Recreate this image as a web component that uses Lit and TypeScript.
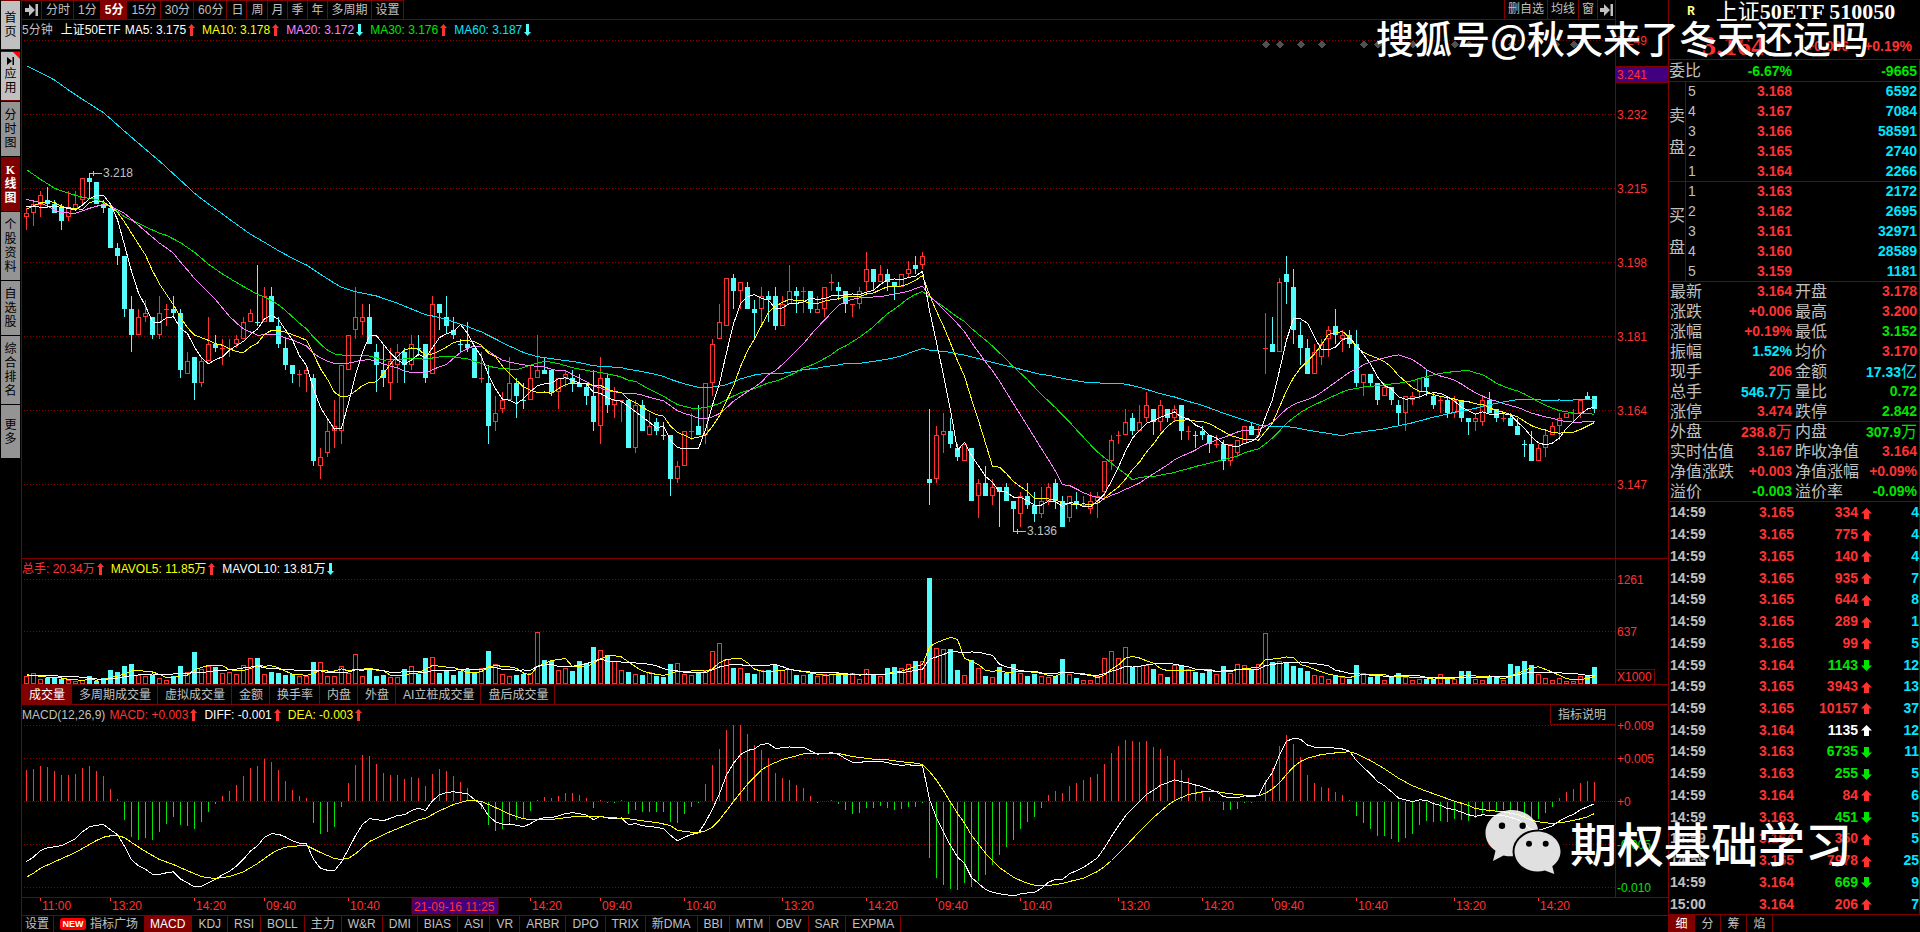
import { LitElement, html, svg, css, nothing } from "lit";
import { customElement } from "lit/decorators.js";
import { classMap } from "lit/directives/class-map.js";

/* ---------- market data ---------- */

interface Candle { up: boolean; high: number; top: number; bottom: number; low: number; }
type Key = [number, number];

/* Values are kept in thirds of a chart unit, measured downwards from the top of the window.
   Each record is direction + high, body top, body bottom, low. */
const parse = (text: string, base: number): Candle[] =>
  text.trim().split(/\s*;\s*/).filter(Boolean).map((row) => {
    const [high, top, bottom, low] = row.slice(1).split(",").map((n) => Number(n) + base);
    return { up: row[0] === "u", high, top, bottom, low };
  });

const CANDLES: Candle[] = [
  ...parse(`u625,640,650,690;u600,613,638,678;u573,586,612,651;d561,600,612,625;d600,612,638,638;d612,625,663,690;
u573,625,650,663;u573,613,625,630;u535,535,598,612;d519,534,546,598;d546,546,612,612;d600,612,625,638;
d625,625,744,744;d730,744,768,795;d768,768,927,951;d888,927,1005,1056;u927,952,1003,1003;u900,940,950,965;
d951,951,1005,1017;u888,940,1004,1017;u913,928,928,978;d888,927,939,951;d927,939,1110,1134;u1057,1084,1120,1120;
d1071,1071,1149,1200;u1071,1084,1148,1161;u952,1032,1082,1082;d1005,1032,1044,1056;u1018,1045,1045,1095;u1018,1045,1045,1071;
u1005,1018,1030,1044;u951,967,1016,1016;u927,940,965,965;d795,967,967,978;u861,888,965,965;d861,888,966,966;
d951,978,1032,1044;d1018,1044,1095,1110;d1095,1095,1122,1149;u1110,1122,1122,1161;u1097,1111,1121,1176`, 0),
  ...parse(`d432,444,693,708;u654,681,707,747;u564,603,667,681;u510,588,601,654;u406,406,601,642;u316,316,418,418;
u171,262,298,327;u222,262,274,315;d222,261,342,342;d342,366,405,486;d342,420,444,471;u354,393,457,510;
u342,367,403,459;d354,366,405,459;u316,343,403,420;d316,355,355,378;d342,342,444,459;u198,222,430,430;
d222,222,249,300;d198,261,288,313;d262,300,315,327;d327,343,343,366;d276,342,354,366;d354,354,444,444;
u366,445,445,459;d405,459,588,642;u498,550,574,603;u486,511,535,549;u381,460,508,508;d444,459,498,564;
d459,511,511,537;u408,445,508,508;u316,421,442,442;d381,420,432,432;d420,420,486,498;u445,445,484,537;
u420,433,443,471;d420,444,459,486;d432,459,471,471;d459,471,498,525;d420,498,576,603;u381,445,586,642;
d432,444,525,549;u471,511,523,564;u511,511,511,576;d510,510,654,654;u510,526,652,669;d510,525,603,603;
u549,589,613,613;d564,576,603,615;d576,616,616,630;d615,615,747,798;u693,709,745,759;u604,604,706,706;
u549,604,604,630;d525,588,615,615;u460,460,613,642;u327,343,457,498;u222,277,325,325;u145,145,286,286;
d132,144,183,237;u157,157,181,237;d156,171,237,237;d210,237,249,327;u171,199,235,285;d183,198,210,276;
d171,198,288,300;u198,223,286,286;u105,184,220,220;d171,183,198,249;u171,184,184,249;d183,183,237,249;
u198,238,247,247;u172,172,235,261;u132,157,157,183;d156,171,183,210;d183,183,222,249;u224,224,224,261;
u171,184,220,237;u66,118,154,183;d117,117,156,183;u105,133,154,154;d117,132,156,183;d156,156,171,210;
u133,133,168,168;u93,118,130,144;d78,105,117,132;u66,79,103,117;d537,747,759,825;u588,616,745,759;
u549,604,613,669;d564,603,642,654;d642,654,681,693;u643,643,691,691;d654,654,813,813;u747,760,796,864;
d708,759,798,798;u747,772,796,825;d771,771,786,891;d759,771,813,813;d813,813,837,906;u786,799,850,891;
d759,798,825,837;d786,825,852,876;u771,814,850,864;u759,773,811,825;d747,759,813,837;d798,813,891,891;
u799,799,862,876;d786,813,825,837;u798,826,826,831;u786,814,836,852;u786,799,811,864;u694,694,784,811;
u615,631,691,720;u603,616,616,642;u537,577,613,613;d549,564,603,615;u525,577,601,601;u486,526,562,576;
d537,537,576,615;u510,526,574,603;d537,537,564,576;u525,538,562,576;d525,525,603,630;u588,604,604,630;
d603,616,616,654;d588,603,615,630;d615,615,642,669;u615,643,643,654;d630,642,693,720;u643,643,691,708;
u631,631,667,681;u589,589,640,640;d576,588,615,615;u588,616,616,620;u249,355,355,432;d261,342,366,366;
u144,157,364,364;d78,132,156,222;d117,171,300,342;d276,315,354,405;d327,354,432,432;u342,367,430,430;
u327,343,379,405;u288,301,325,381;d237,288,315,342;u300,316,325,366;d300,315,342,354;d300,342,459,471;
u433,433,457,498;d432,432,459,471;d459,459,510,525;u459,472,496,496;d471,471,510,525;d510,525,549,588;
u499,499,547,603;u486,499,508,525;u445,445,484,508;d420,444,471,498;d486,498,525,537;u498,511,511,549;
d498,510,549,564;u498,511,547,564;d510,510,564,576;d564,564,576,615;u549,565,574,603;u498,511,574,588;
d486,510,549,549;d537,537,564,576;u549,565,565,576;d549,564,588,588;d564,588,615,615;d630,643,643,681;
d603,642,693,693;u642,655,691,691;u603,616,652,681;u576,589,613,613;u549,565,586,630;u549,549,562,562;
u537,550,550,576;u511,511,547,564;d486,498,510,510;d498,498,537,549`, 690),
];

const heights = (base: number, text: string): number[] => text.trim().split(/[\s,]+/).map((n) => base - Number(n));

const VOLUME: number[] = [
  ...heights(731, `711,700,718,717,717,720,721,726,722,709,726,715,693,699,681,675,708,711,708,717,723,711,681,697,639,688,
679,684,700,697,703,676,655,657,703,699,702,708,703,709,711,669,667,711,709,679,700,643,709,693,711,708,712,712,690,679,705,
657,652,702,693,708,696,689,702,685,636,673,703,709,708,705,700,577,663,664,691,685,696,666,672,624,631,648,664,691`),
  ...heights(401, `369,373,378,367,381,384,345,340,373,376,371,361,304,280,330,357,355,372,375,361,363,346,363,359,378,376,
375,379,373,373,370,376,371,388,358,375,379,357,354,355,343,336,334,87,295,298,300,363,376,331,355,381,382,354,370,345,370,
381,375,379,382,379,330,373,387,391,391,379,325,304,325,292,352,349,346,360,373,384,346,346,358,369,372,360,373,351,370,343,
346,361,343,250,339,334,342,351,357,366,376,379,388,378,382,390,348,370,384,378,391,381,370,382,391,388,390,388,373,384,388,
366,366,388,391,382,384,391,345,351,336,348,373,385,393,385,394,394,379,378,354`),
];

const MACD_BARS: number[] = `94,97,106,103,91,79,79,82,100,106,91,76,37,7,-53,-104,-113,-107,-113,-89,-65,-44,-68,-71,-80,-59,-29,-5,
16,31,49,76,100,106,127,118,94,61,34,16,10,-62,-95,-89,-74,-14,55,109,139,136,112,85,79,79,67,73,70,46,82,97,91,76,58,40,6,
-20,-68,-86,-80,-59,-53,-47,-26,2,13,10,16,25,25,19,10,-17,4,-4,-4,2,-35,-23,-29,-29,-29,-29,-59,-62,-35,-14,-2,52,109,157,
214,229,229,202,169,154,130,85,70,64,49,40,16,-4,1,4,-5,-23,-35,-32,-17,-17,-11,-17,-23,-20,-14,-14,-4,-167,-227,-248,-260,
-263,-242,-254,-236,-218,-188,-158,-134,-113,-80,-59,-44,-17,19,31,25,46,55,64,73,82,112,145,166,184,181,178,181,163,157,136,
124,94,70,49,31,13,-1,-23,-23,-20,-4,-4,0,64,100,166,199,172,133,79,55,43,40,28,19,4,-41,-62,-80,-101,-101,-110,-119,-107,-95,
-68,-56,-59,-56,-59,-50,-53,-56,-47,-32,-29,-26,-23,-26,-29,-44,-56,-50,-32,-14,10,28,37,55,61,58`.split(",").map(Number);

const spread = (keys: Key[]): number[] => {
  const out: number[] = [];
  for (let k = 0; k < keys.length - 1; k++) {
    const [a, ya] = keys[k];
    const [b, yb] = keys[k + 1];
    for (let i = a; i < b; i++) out.push(ya + ((yb - ya) * (i - a)) / (b - a));
  }
  out.push(keys[keys.length - 1][1]);
  return out;
};

const keysFrom = (zero: number, text: string): Key[] =>
  text.trim().split(/\s+/).map((pair) => {
    const [i, y] = pair.split(":").map(Number);
    return [i, zero - y];
  });

const DEA: number[] = spread([
  ...keysFrom(1084, `0:1311 1:1299 2:1284 4:1265 7:1237 10:1201 11:1191 12:1187 13:1187 14:1192 15:1207 17:1234 19:1258 21:1273 23:1292
25:1309 26:1313 27:1315 29:1309 31:1295 33:1270 35:1240 36:1229 37:1221 39:1217 40:1216 42:1237 44:1255 45:1258 46:1254 47:1241 49:1204
52:1174 54:1157 56:1139 57:1134 59:1112 61:1093 63:1081 64:1081 65:1084 67:1102 69:1122 71:1136 73:1139 75:1138 78:1130 82:1130`),
  ...keysFrom(754, `86:806 88:812 90:817 92:826 93:841 95:846 96:847 97:842 98:831 99:809 101:754 103:702 105:659 106:646 108:628
110:617 111:611 113:610 116:610 118:619 121:627 123:629 125:635 127:639 128:643 129:664 130:690 131:722 132:756 133:789 134:819
135:855 136:882 137:909 138:932 139:952 140:967 141:981 142:991 143:999 144:1005 145:1006 146:1006 147:1003 148:1000 149:994
151:984 153:964 154:949 155:931 157:889 159:844 161:802 163:766 164:751 166:733 168:725 170:724 171:728 173:733 175:737 176:737
177:729 178:716 179:698 180:673 181:650 182:634 183:624 185:613 188:606 189:605 190:611 192:631 194:656 196:684 198:707 200:723
202:738 204:753 206:766 207:775 209:781 211:785 213:793 215:810 216:815 217:818 218:820 220:815 222:806 223:800 224:790`),
]);
const DIFF = DEA.map((v, i) => v + MACD_BARS[i] / 2);

const average = (source: number[], n: number, lead: Key[]): number[] => {
  const start = spread(lead);
  return source.map((_, i) =>
    i < n - 1 && start[i] !== undefined
      ? start[i]
      : source.slice(Math.max(0, i - n + 1), i + 1).reduce((a, b) => a + b, 0) / Math.min(n, i + 1));
};

const CLOSES = CANDLES.map((c) => (c.up ? c.top : c.bottom));
const PRICE_LINES: [string, number[]][] = [
  ["ma60", average(CLOSES, 60, [[0, 197], [2, 218], [4, 240], [6, 270], [8, 298], [10, 325], [11, 338], [13, 375], [15, 412],
    [17, 448], [19, 483], [21, 522], [23, 560], [24, 580], [26, 612], [28, 642], [30, 673], [32, 703], [34, 727], [36, 752],
    [38, 775], [40, 795], [42, 823], [44, 850], [45, 862], [47, 875], [50, 888], [53, 910], [57, 944], [59, 952]])],
  ["ma30", average(CLOSES, 30, [[0, 509], [2, 538], [4, 565], [6, 580], [8, 592], [10, 598], [12, 618], [14, 650], [17, 680],
    [19, 700], [20, 706], [22, 728], [24, 757], [26, 793], [28, 822], [29, 835]])],
  ["ma20", average(CLOSES, 20, [[0, 598], [2, 608], [4, 630], [5, 638], [7, 640], [9, 625], [11, 613], [12, 618], [14, 640],
    [16, 676], [18, 712], [19, 728]])],
  ["ma10", average(CLOSES, 10, [[0, 628], [1, 617], [2, 609], [3, 604], [4, 607], [5, 620], [7, 626], [8, 628]])],
  ["ma5", average(CLOSES, 5, [[0, 620], [1, 618], [2, 622], [3, 621]])],
];
const VOLUME_LINES: [string, number[]][] = [
  ["ma10", average(VOLUME, 5, [[0, 26], [1, 24], [3, 19]])],
  ["ma5", average(VOLUME, 10, [[0, 25], [2, 25], [5, 22], [8, 19]])],
];

/* ---------- chart geometry ---------- */

const W = 1593;
const PRICE = { top: 20, height: 538 };
const VOL = { top: 559, height: 125 };
const MACD = { top: 705, height: 192 };
const cx = (i: number) => 4.5 + 7 * i;
const pctX = (x: number) => `${((x / W) * 100).toFixed(3)}%`;
const pct = (y: number, panel: { height: number }) => `${((y / panel.height) * 100).toFixed(3)}%`;
const points = (values: number[], toY: (v: number) => number) =>
  values.map((v, i) => `${cx(i)},${toY(v).toFixed(1)}`).join(" ");

const grid = (ys: number[]) => ys.map((y) => svg`<line class="grid" x1="2" x2=${W} y1=${y} y2=${y}></line>`);

const candle = (c: Candle, i: number) => {
  const x = cx(i);
  const snap = c.up ? Math.floor : Math.round;
  const high = Math.round(c.high / 3) - PRICE.top;
  const low = Math.round(c.low / 3) - PRICE.top;
  const top = snap(c.top / 3) - PRICE.top;
  const bottom = snap(c.bottom / 3) - PRICE.top;
  const kind = c.up ? "up" : "down";
  if (c.top === c.bottom) {
    return svg`<path class="${kind} line" d="M${x} ${high}V${Math.max(low, top + 1)}M${x - 2.5} ${top + 0.5}h5"></path>`;
  }
  return c.up
    ? svg`<path class="up line" d="M${x} ${high}V${top}M${x} ${bottom + 1}V${Math.max(low, bottom + 1)}M${x - 2} ${top + 0.5}h4V${bottom + 0.5}h-4Z"></path>`
    : svg`<path class="down line" d="M${x} ${high}V${low}"></path><rect class="down" x=${x - 2.5} y=${top} width="5" height=${bottom - top}></rect>`;
};

const volumeBar = (h: number, i: number) => {
  const height = Math.round(h / 3);
  const x = cx(i);
  const up = CANDLES[i].up;
  return up
    ? svg`<rect class="up line" x=${x - 2} y=${VOL.height - height - 0.5} width="4" height=${height}></rect>`
    : svg`<rect class="down" x=${x - 2.5} y=${VOL.height - height - 1} width="5" height=${height + 1}></rect>`;
};

const ZERO = 96;
const macdBar = (v: number, i: number) =>
  v === 0 ? nothing : v > 0
    ? svg`<line class="up line" x1=${cx(i)} x2=${cx(i)} y1=${ZERO - v / 3} y2=${ZERO}></line>`
    : svg`<line class="fall line" x1=${cx(i)} x2=${cx(i)} y1=${ZERO + 1} y2=${ZERO + 1 - v / 3}></line>`;

const DIAMONDS = [1244, 1258, 1279, 1300, 1342, 1356, 1391, 1433, 1447, 1490, 1511, 1534, 1552];

/* ---------- labels ---------- */

const PERIODS = ["分时", "1分", "5分", "15分", "30分", "60分", "日", "周", "月", "季", "年", "多周期", "设置"];
const VIEWS = ["分时图", "K线图", "个股资料", "自选股", "综合排名", "更多"];
const VOLUME_TABS = ["成交量", "多周期成交量", "虚拟成交量", "金额", "换手率", "内盘", "外盘", "AI立桩成交量", "盘后成交量"];
const INDICATORS = ["MACD", "KDJ", "RSI", "BOLL", "主力", "W&R", "DMI", "BIAS", "ASI", "VR", "ARBR", "DPO", "TRIX", "新DMA",
  "BBI", "MTM", "OBV", "SAR", "EXPMA"];
const TIMES: [number, string][] = [[2, "11:00"], [12, "13:20"], [24, "14:20"], [34, "09:40"], [46, "10:40"], [72, "14:20"],
  [82, "09:40"], [94, "10:40"], [108, "13:20"], [120, "14:20"], [130, "09:40"], [142, "10:40"], [156, "13:20"], [168, "14:20"],
  [178, "09:40"], [190, "10:40"], [204, "13:20"], [216, "14:20"]];

const ASKS = [["5", "3.168", "6592"], ["4", "3.167", "7084"], ["3", "3.166", "58591"], ["2", "3.165", "2740"], ["1", "3.164", "2266"]];
const BIDS = [["1", "3.163", "2172"], ["2", "3.162", "2695"], ["3", "3.161", "32971"], ["4", "3.160", "28589"], ["5", "3.159", "1181"]];

/* label, value, tone, unit */
const QUOTES: string[][] = [
  ["最新", "3.164", "red"], ["开盘", "3.178", "red"],
  ["涨跌", "+0.006", "red"], ["最高", "3.200", "red"],
  ["涨幅", "+0.19%", "red"], ["最低", "3.152", "green"],
  ["振幅", "1.52%", "cyan"], ["均价", "3.170", "red"],
  ["现手", "206", "red"], ["金额", "17.33", "cyan", "亿"],
  ["总手", "546.7", "cyan", "万"], ["量比", "0.72", "green"],
  ["涨停", "3.474", "red"], ["跌停", "2.842", "green"],
];
const FUND: string[][] = [
  ["外盘", "238.8", "red", "万"], ["内盘", "307.9", "green", "万"],
  ["实时估值", "3.167", "red"], ["昨收净值", "3.164", "red"],
  ["净值涨跌", "+0.003", "red"], ["净值涨幅", "+0.09%", "red"],
  ["溢价", "-0.003", "green"], ["溢价率", "-0.09%", "green"],
];
/* time, price, volume, side, count */
const TICKS: string[][] = [
  ["14:59", "3.165", "334", "red", "4"], ["14:59", "3.165", "775", "red", "4"], ["14:59", "3.165", "140", "red", "4"],
  ["14:59", "3.165", "935", "red", "7"], ["14:59", "3.165", "644", "red", "8"], ["14:59", "3.165", "289", "red", "1"],
  ["14:59", "3.165", "99", "red", "5"], ["14:59", "3.164", "1143", "green", "12"], ["14:59", "3.165", "3943", "red", "13"],
  ["14:59", "3.165", "10157", "red", "37"], ["14:59", "3.164", "1135", "white", "12"], ["14:59", "3.163", "6735", "green", "11"],
  ["14:59", "3.163", "255", "green", "5"], ["14:59", "3.164", "84", "red", "6"], ["14:59", "3.163", "451", "green", "5"],
  ["14:59", "3.164", "350", "red", "5"], ["14:59", "3.165", "7978", "red", "25"], ["14:59", "3.164", "669", "green", "9"],
  ["15:00", "3.164", "206", "red", "7"],
];

const trend = (up: boolean) => html`<svg class="trend ${up ? "red" : "aqua"}" viewBox="0 0 7 12" aria-hidden="true">
  <path d=${up ? "M3.5 0 7 4H5v8H2V4H0Z" : "M3.5 12 0 8h2V0h3v8h2Z"}></path></svg>`;

const fatArrow = (tone: string) => html`<svg class="fat ${tone}" viewBox="0 0 11 11" aria-hidden="true">
  <path d=${tone === "green" ? "M5.5 11 0 5.5h3V0h5v5.5h3Z" : "M5.5 0 11 5.5H8V11H3V5.5H0Z"}></path></svg>`;

const jumpIcon = html`<svg class="jump" viewBox="0 0 13 12" aria-hidden="true">
  <path d="M0 4h4V0l6 6-6 6V8H0Z"></path><path d="M10.5 0H13v12h-2.5Z"></path></svg>`;

const tabs = (names: string[], active: string) => names.map((name) => html`<button type="button"
  class=${classMap({ tab: true, active: name === active })} aria-pressed=${name === active ? "true" : "false"}>${name}</button>`);

const axisText = (rows: [number, string, string][], panel: { height: number }) => html`
  <svg class="layer" aria-hidden="false">
    ${rows.map(([y, text, tone]) => svg`<text class=${tone} x="1" dy="5" y=${pct(y, panel)}>${text}</text>`)}
  </svg>`;

@customElement("app-root")
export class AppRoot extends LitElement {
  static styles = css`
    :host {
      position: relative;
      display: grid;
      grid-template-columns: 22px minmax(0, 1fr) 252px;
      height: 100vh;
      overflow: hidden;
      background: #000;
      color: #c0c0c0;
      font: 12px/16px "Liberation Sans", "Noto Sans CJK SC", sans-serif;
    }
    *, *::before { box-sizing: border-box; }
    button { margin: 0; border: 0; background: none; color: inherit; font: inherit; white-space: nowrap; cursor: pointer; }
    .red { color: #ff3232; fill: #ff3232; }
    .green { color: #00e600; fill: #00e600; }
    .cyan { color: #00e6ff; fill: #00e6ff; }
    .aqua { color: #54fcfc; fill: #54fcfc; }
    .white { color: #fff; fill: #fff; }
    .yellow { color: #ff0; }
    .violet { color: #ff80ff; }
    .grey { fill: #c0c0c0; }

    /* side navigation */
    .side { display: flex; flex-direction: column; gap: 1px; border-right: 1px solid #800000; padding-left: 1px; padding-right: 1px; }
    .side .vertical {
      display: flex; flex-direction: column; align-items: center; justify-content: center;
      min-height: 53px; padding: 6px 3px; background: #949494; color: #000; line-height: 14px;
    }
    .side .word { width: 13px; white-space: normal; word-break: break-all; text-align: center; }
    .side .pale { position: relative; min-height: 50px; background: #c0c0c0; border: solid #800000; border-width: 1px 0; padding: 3px; }
    .side .corner { position: absolute; top: 0; right: 0; width: 7px; height: 7px; fill: #f00; }
    .side .enter { width: 7px; height: 8px; margin-bottom: 2px; fill: #000; }
    .side .current { background: #800000; color: #fff; font-family: "Liberation Serif", "Noto Sans CJK SC", serif; font-weight: bold; }

    /* centre column */
    .centre { display: flex; flex-direction: column; min-width: 0; }
    .row { display: grid; grid-template-columns: minmax(0, 1fr) 53px; }
    .bar { height: 20px; }
    .tools { display: flex; justify-content: space-between; border-bottom: 1px solid #800000; }
    .group { display: flex; }
    .group .tab { border-right: 1px solid #800000; padding: 0 3px 0 4px; line-height: 18px; }
    .left .tab { border-top: 1px solid #800000; }
    .left .jumper { padding: 0 3px; }
    .right .tab { border-right: 0; border-left: 1px solid #800000; padding: 0 3px; line-height: 19px; }
    .right .jumper { padding: 0 2px; }
    .active { background: #800000; color: #fff; font-weight: bold; }
    .jump { display: block; width: 13px; height: 12px; fill: #c0c0c0; }
    .edge { border-left: 1px solid #800000; }

    .panel { position: relative; min-height: 0; border-bottom: 1px solid #800000; }
    .price { flex: 538 1 0; }
    .volume { flex: 125 1 0; }
    .macd { flex: 192 1 0; }
    .plot { position: relative; min-width: 0; }
    .scale { position: relative; }
    .layer { position: absolute; inset: 0; display: block; width: 100%; height: 100%; overflow: visible; }
    .layer text { font: 12px "Liberation Sans", sans-serif; }
    .crisp { shape-rendering: crispEdges; }
    .grid { stroke: #900000; stroke-dasharray: 1 2; }
    .zero { stroke: #900000; stroke-dasharray: 1 1; }
    .line { fill: none; stroke-width: 1; }
    .up { stroke: #ff3232; fill: none; }
    .down { fill: #54fcfc; }
    .down.line { stroke: #54fcfc; }
    .fall { stroke: #00e600; }
    .curve { fill: none; stroke-width: 1; }
    .ma5 { stroke: #fff; }
    .ma10 { stroke: #ff0; }
    .ma20 { stroke: #ff80ff; }
    .ma30 { stroke: #00e600; }
    .ma60 { stroke: #00e6ff; }
    .diamond { fill: #505050; }
    .pointer { stroke: #c0c0c0; }
    .legend { position: relative; display: flex; align-items: center; height: 20px; white-space: pre; }
    .legend .name { margin-right: 8px; }
    .legend .title { margin-right: 4px; }
    .trend { width: 7px; height: 12px; margin: 0 7px 0 2px; }
    .mark { fill: #400080; stroke: #800000; }
    .unit { position: absolute; left: 0; bottom: 0; border: 1px solid #800000; border-left: 0; border-bottom: 0; padding: 0 2px 0 1px; line-height: 14px; }
    .explain { position: absolute; top: 0; right: 0; height: 20px; padding: 0 9px 0 7px; border-left: 1px solid #800000; border-bottom: 1px solid #800000; line-height: 20px; }

    .strip { display: flex; overflow: hidden; border-bottom: 1px solid #800000; }
    .strip .tab { border-right: 1px solid #800000; padding: 1px 6px 0 7px; line-height: 19px; }
    .strip .active { font-weight: normal; }
    .times { height: 17px; }
    .bottom { height: 17px; border-bottom: 0; border-top: 1px solid #800000; }
    .bottom .tab { line-height: 15px; padding: 0 6px; }
    .bottom .opener { padding: 0 4px 0 3px; }
    .bottom .market { display: flex; align-items: center; gap: 4px; padding: 0 6px 0 6px; border-right: 0; }
    .new { width: 26px; height: 12px; border-radius: 3px; background: #f00; color: #fff; font-size: 9px; font-weight: bold; line-height: 12px; text-align: center; }

    /* quote column */
    .quote { display: flex; flex-direction: column; border-left: 1px solid #800000; font-size: 14px; min-width: 0; }
    .section { border-right: 1px solid #800000; box-shadow: inset 0 -1px #800000; }
    .head { height: 60px; padding: 2px 8px 0 18px; box-shadow: inset 0 -1px #800000; }
    .security { display: flex; align-items: center; height: 20px; gap: 21px; font: bold 22px/20px "Liberation Serif", "Noto Sans CJK SC", serif; color: #fff; white-space: nowrap; }
    .security .flag { font: bold 13px/20px "Liberation Mono", monospace; color: #ff8; }
    .security .cn { font-weight: 400; }
    .last { display: flex; align-items: center; justify-content: flex-end; gap: 15px; height: 38px; padding-top: 10px; font-weight: bold; }
    .last .big { margin-right: 26px; font: bold 28px/28px "Liberation Serif", serif; }
    .ratio { display: grid; grid-template-columns: 40px 83px 1fr; height: 22px; line-height: 22px; padding-right: 2px; }
    .kanji { font-size: 16px; }
    .num { text-align: right; font-weight: bold; }
    .book { display: grid; grid-template-columns: 17px 1fr; }
    .book .who { display: flex; flex-direction: column; justify-content: center; gap: 16px; border-right: 1px solid #800000; font-size: 16px; line-height: 16px; }
    table { width: 100%; border-collapse: collapse; table-layout: fixed; }
    td, th { padding: 0; font-weight: normal; text-align: left; }
    .levels td, .levels th { height: 20px; padding-bottom: 2px; line-height: 18px; }
    .levels .no { width: 25px; padding-left: 2px; }
    .levels .at { width: 81px; }
    td.num { text-align: right; font-weight: bold; }
    .levels .qty { padding-right: 2px; }
    .stats { display: grid; grid-template-columns: 125px 1fr; margin: 0; }
    .item { display: flex; justify-content: space-between; height: 20px; line-height: 19px; padding: 0 2px 0 1px; white-space: nowrap; }
    .item dt { font-size: 16px; }
    .item dd { margin: 0; font-weight: bold; }
    .item .suffix { font-size: 16px; font-weight: 400; }
    .ticks { flex: 1; display: grid; min-height: 0; }
    .ticks td { padding-bottom: 1px; }
    .ticks .time { width: 66px; padding-left: 1px; font-weight: bold; }
    .ticks .deal { width: 59px; }
    .ticks .size { width: 64px; }
    .ticks .side-mark { width: 20px; padding: 1px 0 0 3px; }
    .fat { display: block; width: 11px; height: 11px; }
    .foot { display: flex; height: 17px; font-size: 12px; }
    .foot .tab { width: 26px; padding: 0; line-height: 16px; border-right: 1px solid #800000; }
    .foot .active { font-weight: normal; }

    /* overlays */
    .watermark { position: absolute; color: #fff; white-space: nowrap; pointer-events: none; font-family: "Noto Sans CJK SC", sans-serif; text-shadow: 1px 1px 2px #0009; }
    .author { top: 12px; right: 51px; font-size: 38px; font-weight: 500; line-height: 50px; }
    .channel { right: 68px; bottom: 57px; display: flex; align-items: center; gap: 8px; font-size: 47px; font-weight: 500; line-height: 66px; }
    .channel .logo { width: 78px; height: 66px; fill: #fff; }
    .channel .bubble { opacity: 0.88; }
    .channel .hole { fill: #000; }
  `;

  private sideNav() {
    return html`<nav class="side" aria-label="视图">
      <button type="button" class="vertical pale"><span class="word">首页</span></button>
      <button type="button" class="vertical pale">
        <svg class="corner" viewBox="0 0 7 7" aria-hidden="true"><path d="M0 0h7v7Z"></path></svg>
        <svg class="enter" viewBox="0 0 7 8" aria-hidden="true"><path d="M0 0 5 4 0 8ZM5.5 0H7v8H5.500Z"></path></svg>
        <span class="word">应用</span>
      </button>
      ${VIEWS.map((v) => html`<button type="button" class=${classMap({ vertical: true, current: v === "K线图" })}>
        <span class="word">${v}</span></button>`)}
    </nav>`;
  }

  private pricePanel() {
    const item = (tone: string, text: string, up: boolean) => html`<span class=${tone}>${text}</span>${trend(up)}`;
    return html`<section class="row panel price">
      <div class="plot">
        <svg class="layer crisp" viewBox="0 0 ${W} ${PRICE.height}" preserveAspectRatio="none">
          ${grid([20.5, 94.5, 168.5, 242.5, 316.5, 390.5, 464.5])}
          ${DIAMONDS.map((x) => svg`<path class="diamond" d="M${x} 20l4 4.500-4 4.500-4-4.500Z"></path>`)}
          ${CANDLES.map(candle)}
          ${PRICE_LINES.map(([name, v]) => svg`<polyline class="curve ${name}" points=${points(v, (y) => y / 3 - PRICE.top)}></polyline>`)}
          <path class="pointer" d="M68 153.500h12M71.500 151v5"></path>
          <path class="pointer" d="M992 511.500h12M995.500 509v5"></path>
        </svg>
        <svg class="layer">
          <text class="grey" x=${pctX(81)} y=${pct(157, PRICE)}>3.218</text>
          <text class="grey" x=${pctX(1005)} y=${pct(515, PRICE)}>3.136</text>
        </svg>
        <div class="legend">
          <span class="name">5分钟</span><span class="title white">上证50ETF</span>
          ${item("white", "MA5: 3.175", true)}${item("yellow", "MA10: 3.178", true)}${item("violet", "MA20: 3.172", false)}
          ${item("green", "MA30: 3.176", true)}${item("cyan", "MA60: 3.187", false)}
        </div>
      </div>
      <div class="scale edge">
        <svg class="layer"><rect class="mark" x="-0.5" width="53" height="16" y=${pct(46.5, PRICE)}></rect></svg>
        ${axisText([[20, "3.249", "red"], [54, "3.241", "red"], [94, "3.232", "red"], [168, "3.215", "red"], [242, "3.198", "red"],
          [316, "3.181", "red"], [390, "3.164", "red"], [464, "3.147", "red"]], PRICE)}
      </div>
    </section>`;
  }

  private volumePanel() {
    return html`<section class="row panel volume">
      <div class="plot">
        <svg class="layer crisp" viewBox="0 0 ${W} ${VOL.height}" preserveAspectRatio="none">
          ${grid([20.5, 72.5])}
          ${VOLUME.map(volumeBar)}
          ${VOLUME_LINES.map(([name, v]) => svg`<polyline class="curve ${name}" points=${points(v, (h) => VOL.height - 0.5 - h / 3)}></polyline>`)}
        </svg>
        <div class="legend">
          <span class="red">总手: 20.34万</span>${trend(true)}<span class="yellow">MAVOL5: 11.85万</span>${trend(true)}<span
            class="white">MAVOL10: 13.81万</span>${trend(false)}
        </div>
      </div>
      <div class="scale edge">
        ${axisText([[20, "1261", "red"], [72, "637", "red"]], VOL)}
        <span class="unit red">X1000</span>
      </div>
    </section>`;
  }

  private macdPanel() {
    const toY = (v: number) => ZERO + 0.5 - v / 3;
    return html`<section class="row panel macd">
      <div class="plot">
        <svg class="layer crisp" viewBox="0 0 ${W} ${MACD.height}" preserveAspectRatio="none">
          ${grid([20.5, 53.5, 139.5, 182.5])}
          <line class="zero" x1="2" x2=${W} y1=${ZERO + 0.5} y2=${ZERO + 0.5}></line>
          ${MACD_BARS.map(macdBar)}
          <polyline class="curve ma5" points=${points(DIFF, toY)}></polyline>
          <polyline class="curve ma10" points=${points(DEA, toY)}></polyline>
        </svg>
        <div class="legend">
          <span class="title">MACD(12,26,9)</span><span class="red">MACD: +0.003</span>${trend(true)}<span
            class="white">DIFF: -0.001</span>${trend(true)}<span class="yellow">DEA: -0.003</span>${trend(true)}
        </div>
        <button type="button" class="explain">指标说明</button>
      </div>
      <div class="scale edge">
        ${axisText([[20, "+0.009", "red"], [53, "+0.005", "red"], [96, "+0", "red"], [139, "-0.005", "green"], [182, "-0.010", "green"]], MACD)}
      </div>
    </section>`;
  }

  private book(label: string, side: string, rows: string[][]) {
    return html`<div class="section book">
      <div class="who"><span>${side}</span><span>盘</span></div>
      <table class="levels" aria-label=${label}>
        ${rows.map(([no, price, qty]) => html`<tr>
          <th scope="row" class="no">${no}</th><td class="num at red">${price}</td><td class="num qty cyan">${qty}</td></tr>`)}
      </table>
    </div>`;
  }

  private stats(items: string[][]) {
    return html`<dl class="section stats">
      ${items.map(([label, value, tone, unit]) => html`<div class="item">
        <dt>${label}</dt><dd class=${tone}>${value}${unit ? html`<span class="suffix">${unit}</span>` : nothing}</dd></div>`)}
    </dl>`;
  }

  private quote() {
    return html`<aside class="quote">
      <header class="head">
        <div class="security"><span class="flag">R</span><span><span class="cn">上证</span>50ETF 510050</span></div>
        <div class="last red"><span class="big">3.164</span><span>+0.006</span><span>+0.19%</span></div>
      </header>
      <div class="section ratio"><span class="kanji">委比</span><span class="num green">-6.67%</span><span class="num green">-9665</span></div>
      ${this.book("卖盘", "卖", ASKS)}
      ${this.book("买盘", "买", BIDS)}
      ${this.stats(QUOTES)}
      ${this.stats(FUND)}
      <div class="section ticks">
        <table aria-label="成交明细">
          ${TICKS.map(([time, price, size, tone, count]) => html`<tr>
            <td class="time">${time}</td><td class="num deal red">${price}</td><td class="num size ${tone}">${size}</td>
            <td class="side-mark">${fatArrow(tone)}</td><td class="num cyan">${count}</td></tr>`)}
        </table>
      </div>
      <div class="foot">${tabs(["细", "分", "筹", "焰"], "细")}</div>
    </aside>`;
  }

  render() {
    return html`
      ${this.sideNav()}
      <main class="centre">
        <div class="row bar">
          <div class="tools">
            <div class="group left">
              <button type="button" class="tab jumper" aria-label="展开">${jumpIcon}</button>
              ${tabs(PERIODS, "5分")}
            </div>
            <div class="group right">
              ${tabs(["删自选", "均线", "窗"], "")}
              <button type="button" class="tab jumper" aria-label="收起">${jumpIcon}</button>
            </div>
          </div>
          <div class="edge"></div>
        </div>
        ${this.pricePanel()}
        ${this.volumePanel()}
        <div class="strip bar">${tabs(VOLUME_TABS, "成交量")}</div>
        ${this.macdPanel()}
        <div class="row times">
          <div class="plot">
            <svg class="layer">
              ${TIMES.map(([i, t]) => svg`<line class="up" x1=${pctX(cx(i))} x2=${pctX(cx(i))} y2="3"></line>
                <text class="red" x=${pctX(cx(i) + 1.5)} y="12">${t}</text>`)}
              <rect class="mark" x=${pctX(390)} y="0" width="86" height="16"></rect>
              <text class="red" x=${pctX(392)} y="13">21-09-16 11:25</text>
            </svg>
          </div>
        </div>
        <div class="strip bottom">
          <button type="button" class="tab opener">设置</button>
          <button type="button" class="tab market"><span class="new">NEW</span>指标广场</button>
          ${tabs(INDICATORS, "MACD")}
        </div>
      </main>
      ${this.quote()}
      <div class="watermark author">搜狐号@秋天来了冬天还远吗</div>
      <div class="watermark channel">
        <svg class="logo" viewBox="0 0 78 66" aria-hidden="true">
          <g class="bubble">
            <path d="M28 1C13.400 1 1.500 11.300 1.500 24c0 7.200 3.800 13.600 10 17.800L9 52l10.500-5.600C22.200 47 25 47.200 28 47.200c14.600 0 26.500-10.500 26.500-23.200S42.600 1 28 1Z"></path>
          </g>
          <ellipse class="hole" cx="53.500" cy="42.500" rx="25" ry="22"></ellipse>
          <path class="bubble" d="M53.500 22.500c-12.700 0-23 9-23 20s10.300 20 23 20c2.600 0 5-.3 7.300-1L70.300 65l-2-7.700c5-3.700 8.200-9 8.200-14.800 0-11-10.300-20-23-20Z"></path>
          <circle class="hole" cx="18" cy="16.700" r="3.200"></circle><circle class="hole" cx="38.700" cy="16.700" r="3.200"></circle>
          <circle class="hole" cx="45" cy="34.700" r="3"></circle><circle class="hole" cx="61.700" cy="34.700" r="3"></circle>
        </svg>
        <span>期权基础学习</span>
      </div>`;
  }
}
